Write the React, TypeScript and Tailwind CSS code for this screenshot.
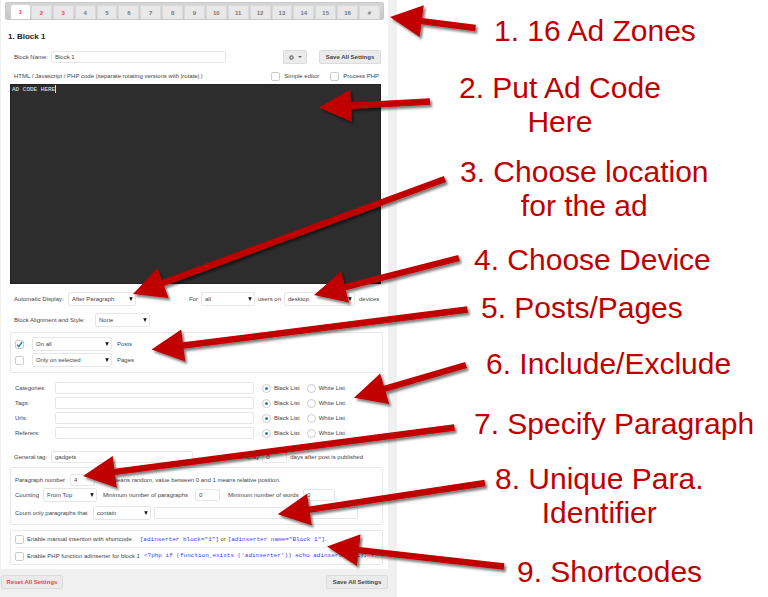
import React from 'react';

type Point = [number, number];

const TABS = ['1', '2', '3', '4', '5', '6', '7', '8', '9', '10', '11', '12', '13', '14', '15', '16', '#'];
const ACTIVE_TABS = ['1', '2', '3'];

const LISTS = ['Categories', 'Tags', 'Urls', 'Referers'];

const NOTES: { lines: string[]; className: string }[] = [
  { lines: ['1. 16 Ad Zones'], className: 'mt-[14px] ml-[97px]' },
  { lines: ['2. Put Ad Code', 'Here'], className: 'mt-[23px] ml-[62px]' },
  { lines: ['3. Choose location', 'for the ad'], className: 'mt-[16px] ml-[63px]' },
  { lines: ['4. Choose Device'], className: 'mt-[20px] ml-[77px]' },
  { lines: ['5. Posts/Pages'], className: 'mt-[14px] ml-[84px]' },
  { lines: ['6. Include/Exclude'], className: 'mt-[22px] ml-[89px]' },
  { lines: ['7. Specify Paragraph'], className: 'mt-[26px] ml-[77px]' },
  { lines: ['8. Unique Para.', 'Identifier'], className: 'mt-[21px] ml-[98px]' },
  { lines: ['9. Shortcodes'], className: 'mt-[25px] ml-[120px]' },
];

// [tip, tail] of every arrow
const ARROWS: [Point, Point][] = [
  [[390, 17], [475.5, 28]],
  [[319, 107.5], [430, 101.5]],
  [[133, 294], [445, 179]],
  [[314, 295], [459, 258]],
  [[151.5, 349.5], [467.5, 309.5]],
  [[354, 397.7], [466, 365]],
  [[83, 476], [454.5, 427.5]],
  [[277.7, 514.3], [485, 483]],
  [[327, 546.5], [504, 566.5]],
];

const arrowPoints = ([tx, ty]: Point, [ex, ey]: Point) => {
  const len = Math.hypot(ex - tx, ey - ty);
  const ux = (ex - tx) / len;
  const uy = (ey - ty) / len;
  const at = (along: number, side: number) =>
    `${(tx + ux * along - uy * side).toFixed(1)},${(ty + uy * along + ux * side).toFixed(1)}`;
  return [at(0, 0), at(32, 16), at(32, 3.2), at(len, 3.2), at(len, -3.2), at(32, -3.2), at(32, -16)].join(' ');
};

const Arrows: React.FC = () => (
  <svg
    className="absolute inset-0 w-full h-full pointer-events-none"
    viewBox="0 0 768 597"
    preserveAspectRatio="xMinYMin meet"
    aria-hidden="true"
  >
    <defs>
      <filter id="arrow-shadow" x="-10%" y="-10%" width="120%" height="130%">
        <feDropShadow dx="2" dy="2.5" stdDeviation="1.2" floodColor="#000" floodOpacity="0.5" />
      </filter>
    </defs>
    {ARROWS.map(([tip, tail]) => (
      <polygon key={tip.join()} points={arrowPoints(tip, tail)} fill="#c00000" filter="url(#arrow-shadow)" />
    ))}
  </svg>
);

const TextBox: React.FC<{ id?: string; label?: string; value?: string; className: string }> = ({ id, label, value = '', className }) => (
  <input
    id={id}
    aria-label={label}
    type="text"
    defaultValue={value}
    className={`h-3 min-w-0 px-[3px] rounded-xs border border-[#e6e6e6] bg-white text-[#444] leading-none outline-none ${className}`}
  />
);

const Select: React.FC<{ id?: string; label?: string; value: string; className: string }> = ({ id, label, value, className }) => (
  <span className={`relative block shrink-0 h-3.5 ${className}`}>
    <select
      id={id}
      aria-label={label}
      defaultValue={value}
      className="appearance-none block w-full h-full px-[3px] rounded-xs border border-[#e6e6e6] bg-white text-[#444] leading-none outline-none"
    >
      <option>{value}</option>
    </select>
    <svg className="absolute right-[3px] top-[5px] w-1 h-1 pointer-events-none" viewBox="0 0 4 4" aria-hidden="true">
      <path d="M0.2 0.2h3.6L2 3.9z" fill="#111" />
    </svg>
  </span>
);

const Check: React.FC<{ id?: string; label?: string; checked?: boolean }> = ({ id, label, checked }) => (
  <span className="relative block shrink-0 w-[9px] h-[9px]">
    <input
      id={id}
      aria-label={label}
      type="checkbox"
      defaultChecked={checked}
      className="appearance-none block w-full h-full rounded-xs border border-[#ccc] bg-white"
    />
    {checked && (
      <svg className="absolute inset-0 w-full h-full pointer-events-none" viewBox="0 0 9 9" aria-hidden="true">
        <path d="M2 4.6 3.8 6.6 7.2 2" fill="none" stroke="#1e7fc0" strokeWidth="1.4" />
      </svg>
    )}
  </span>
);

const Radio: React.FC<{ name: string; label: string; checked?: boolean }> = ({ name, label, checked }) => (
  <label className="flex items-center gap-[3px] whitespace-nowrap">
    <span className="relative block shrink-0 w-[9px] h-[9px]">
      <input
        type="radio"
        name={name}
        defaultChecked={checked}
        className="peer appearance-none block w-full h-full rounded-full border border-[#ccc] bg-white"
      />
      <span className="hidden peer-checked:block absolute inset-[3px] rounded-full bg-[#1e7fc0]" />
    </span>
    {label}
  </label>
);

const Button: React.FC<{ className?: string; children: React.ReactNode; label?: string }> = ({ className = '', children, label }) => (
  <button
    type="button"
    aria-label={label}
    className={`flex items-center justify-center h-3.5 rounded-xs border border-[#dcdcdc] bg-[#ebebeb] font-bold leading-none whitespace-nowrap ${className}`}
  >
    {children}
  </button>
);

const TabBar: React.FC = () => (
  <nav className="mx-1 flex gap-px h-[18px] pt-[2px] pl-[5px] pr-[3px] rounded-xs border border-[#c8c8c8] bg-linear-to-b from-[#d6d6d6] to-[#c8c8c8]">
    {TABS.map((tab) => {
      const color = ACTIVE_TABS.includes(tab) ? 'text-[#e8474a]' : 'text-[#777]';
      const bg = tab === '1' ? 'bg-white' : 'bg-[#e8e8e8] border border-b-0 border-[#d9d9d9]';
      return (
        <button key={tab} type="button" className={`flex-1 rounded-t-xs font-bold leading-none ${color} ${bg}`}>
          {tab}
        </button>
      );
    })}
  </nav>
);

const SettingsPanel: React.FC = () => (
  <form className="bg-[#f0f0f0] pl-px pr-[9px] pb-2 text-[6px] leading-[8px] text-[#444]">
    <div className="bg-white pt-[2px] pb-1">
      <TabBar />
      <h3 className="mt-3 ml-[7px] text-[8px] leading-[10px] font-bold text-[#222]">1. Block 1</h3>

      <div className="mt-2 pl-[9px] pr-[5px] whitespace-nowrap">
        <div className="pr-[2px]">
          <div className="flex items-center h-3.5 pl-1">
            <label htmlFor="block-name" className="w-[37px]">Block Name:</label>
            <TextBox id="block-name" value="Block 1" className="flex-1" />
            <Button className="ml-[57px] mr-3 w-6 gap-1" label="Options">
              <svg className="w-[5px] h-[5px]" viewBox="0 0 5 5" aria-hidden="true">
                <circle cx="2.5" cy="2.5" r="1.6" fill="none" stroke="#777" strokeWidth="1.4" />
              </svg>
              <svg className="w-1 h-[2px]" viewBox="0 0 4 2" aria-hidden="true">
                <path d="M0 0h4L2 2z" fill="#666" />
              </svg>
            </Button>
            <Button className="w-[62px]">Save All Settings</Button>
          </div>

          <div className="mt-[7px] flex items-center h-2.5 pl-1 pr-[2px]">
            <label htmlFor="code" className="flex-1">
              HTML / Javascript / PHP code (separate rotating versions with |rotate| )
            </label>
            <label className="flex items-center gap-1"><Check />Simple editor</label>
            <label className="ml-[11px] flex items-center gap-1"><Check />Process PHP</label>
          </div>

          <div className="relative mt-[3px]">
            <textarea
              id="code"
              spellCheck={false}
              defaultValue="AD CODE HERE"
              className="block w-full h-[200px] px-px py-px resize-none border border-[#222] bg-[#2d2d2d] font-['Liberation_Mono',monospace] leading-[7px] text-[#e6e6e6] outline-none"
            />
            <span className="absolute left-[45px] top-px w-px h-2 bg-[#ddd]" />
          </div>
        </div>

        <div className="mt-2 flex items-center h-3.5 pl-1">
          <label htmlFor="display" className="w-[54px]">Automatic Display:</label>
          <Select id="display" value="After Paragraph" className="w-[68px]" />
          <label htmlFor="users" className="ml-auto w-3">For</label>
          <Select id="users" value="all" className="w-[54px]" />
          <label htmlFor="device" className="w-[29px] text-center">users on</label>
          <Select id="device" value="desktop" className="w-[71px]" />
          <span className="w-[28px] pl-1">devices</span>
        </div>

        <div className="mt-[7px] flex items-center h-3.5 pl-1">
          <label htmlFor="align" className="w-[81px]">Block Alignment and Style:</label>
          <Select id="align" value="None" className="w-[55px]" />
        </div>

        <div className="mt-[5px] flex flex-col gap-[2px] pt-1 pb-[5px] pl-1 rounded-xs border border-[#e8e8e8]">
          <div className="flex items-center">
            <Check id="posts" checked />
            <Select label="Display on posts" value="On all" className="ml-2 w-20" />
            <label htmlFor="posts" className="ml-[5px]">Posts</label>
          </div>
          <div className="flex items-center">
            <Check id="pages" />
            <Select label="Display on pages" value="Only on selected" className="ml-2 w-20" />
            <label htmlFor="pages" className="ml-[5px]">Pages</label>
          </div>
        </div>

        <div className="mt-[9px] flex flex-col gap-[3px] pl-[5px] pr-[38px]">
          {LISTS.map((name) => (
            <div key={name} className="flex items-center">
              <label htmlFor={name} className="w-10">{name}:</label>
              <TextBox id={name} className="flex-1 mr-2" />
              <div className="flex gap-[7px]">
                <Radio name={`${name}-list`} label="Black List" checked />
                <Radio name={`${name}-list`} label="White List" />
              </div>
            </div>
          ))}
        </div>

        <div className="mt-3 flex items-center pl-1 pr-5">
          <label htmlFor="tag" className="w-[37px]">General tag:</label>
          <TextBox id="tag" value="gadgets" className="w-[142px]" />
          <label htmlFor="days" className="ml-auto mr-[3px]">Display</label>
          <TextBox id="days" value="0" className="w-[25px]" />
          <span className="ml-[3px]">days after post is published</span>
        </div>

        <div className="mt-1 pt-[6px] pb-1 pl-1 rounded-xs border border-[#e8e8e8]">
          <div className="flex items-center">
            <label htmlFor="paragraph" className="w-[55px]">Paragraph number</label>
            <TextBox id="paragraph" value="4" className="w-[25px]" />
            <span className="ml-3">0 means random, value between 0 and 1 means relative position.</span>
          </div>
          <div className="mt-[2px] flex items-center">
            <label htmlFor="counting" className="w-7">Counting</label>
            <Select id="counting" value="From Top" className="w-[54px]" />
            <label htmlFor="min-paragraphs" className="ml-[6px] w-[92px]">Minimum number of paragraphs</label>
            <TextBox id="min-paragraphs" value="0" className="w-[25px]" />
            <label htmlFor="min-words" className="ml-2 w-[75px]">Minimum number of words</label>
            <TextBox id="min-words" value="0" className="w-8" />
          </div>
          <div className="mt-1 flex items-center pr-6">
            <label htmlFor="contain" className="w-[78px]">Count only paragraphs that</label>
            <Select id="contain" value="contain" className="w-[58px]" />
            <TextBox label="Paragraph text" className="flex-1 ml-[3px]" />
          </div>
        </div>

        <div className="mt-[5px] pl-1 rounded-xs border border-[#e8e8e8]">
          <div className="flex items-center h-4">
            <Check id="shortcode" />
            <label htmlFor="shortcode" className="ml-[3px]">Enable manual insertion with shortcode</label>
            <span className="ml-2">
              <code className="font-['Liberation_Mono',monospace] text-[#3a3aff]">[adinserter block="1"]</code>
              {' or '}
              <code className="font-['Liberation_Mono',monospace] text-[#3a3aff]">[adinserter name="Block 1"]</code>.
            </span>
          </div>
          <div className="flex items-center h-[17px] border-t border-[#eee]">
            <Check id="php" />
            <label htmlFor="php" className="ml-[3px]">Enable PHP function adinserter for block 1</label>
            <code className="ml-1 font-['Liberation_Mono',monospace] text-[#3a3aff]">
              {"<?php if (function_exists ('adinserter')) echo adinserter (1); ?>"}
            </code>
          </div>
        </div>
      </div>
    </div>

    <div className="flex justify-between pt-[6px]">
      <Button className="w-[62px] text-[#e8474a]">Reset All Settings</Button>
      <Button className="w-[62px]">Save All Settings</Button>
    </div>
  </form>
);

const App: React.FC = () => (
  <main className="relative grid grid-cols-[minmax(0,397fr)_minmax(0,371fr)] items-start bg-white font-['Liberation_Sans',Arial,sans-serif]">
    <SettingsPanel />
    <ol className="text-[30px] leading-[34px] text-[#c00000] whitespace-nowrap">
      {NOTES.map(({ lines, className }) => (
        <li key={lines[0]} className={`w-fit text-center ${className}`}>
          {lines.map((line) => (
            <span key={line} className="block">{line}</span>
          ))}
        </li>
      ))}
    </ol>
    <Arrows />
  </main>
);

export default App;
